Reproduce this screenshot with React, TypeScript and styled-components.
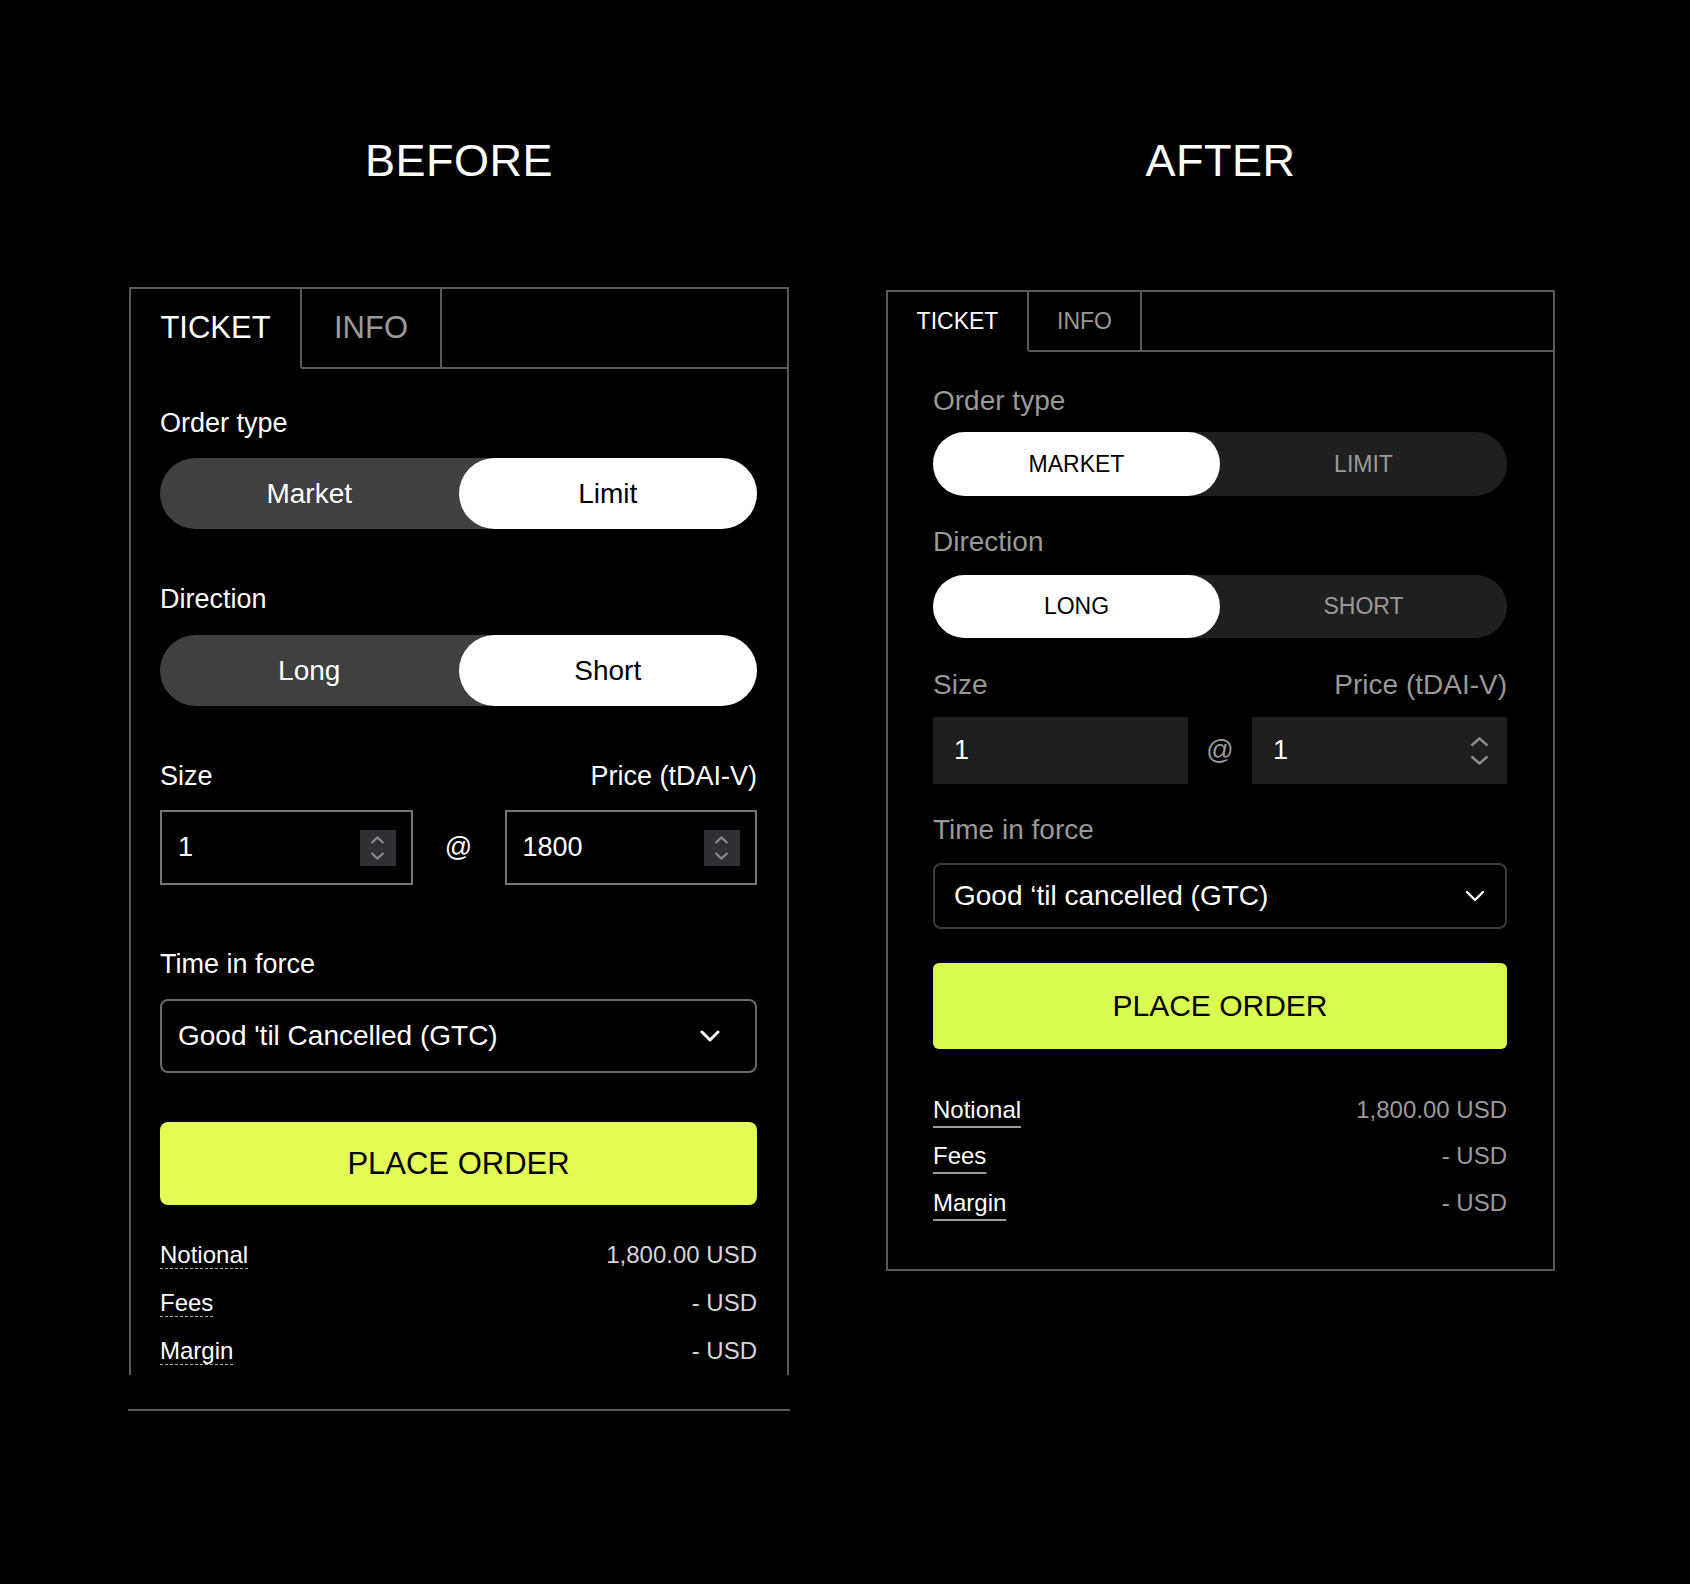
import * as React from 'react';
import styled, { createGlobalStyle } from 'styled-components';

type V = 'before' | 'after';

const look = {
  before: {
    border: '#5a5a5a',
    tabsH: 80,
    tabW: [171, 140],
    tabFont: 31,
    pad: '0 30px 0 29px',
    labelFont: 27,
    labelColor: '#ffffff',
    toggleBg: '#404040',
    toggleFont: 28,
    idleText: '#ffffff',
    inputH: 75,
    atGap: 92,
    selectH: 74,
    buttonBg: '#e4fb55',
    buttonH: 83,
    buttonFont: 31,
    rowH: 48,
  },
  after: {
    border: '#5a5a5a',
    tabsH: 60,
    tabW: [141, 113],
    tabFont: 23,
    pad: '0 46px 43px 45px',
    labelFont: 28,
    labelColor: '#999999',
    toggleBg: '#1f1f1f',
    toggleFont: 23,
    idleText: '#9a9a9a',
    inputH: 67,
    atGap: 64,
    selectH: 66,
    buttonBg: '#d9fb51',
    buttonH: 86,
    buttonFont: 30,
    rowH: 46.5,
  },
};

const GlobalStyle = createGlobalStyle`
  html, body {
    margin: 0;
    background: #000;
  }
  body {
    font-family: "Liberation Sans", Arial, sans-serif;
    color: #fff;
    min-height: 1584px;
  }
`;

const Page = styled.main`
  display: grid;
  grid-template-columns: 660px 669px;
  column-gap: 97px;
  align-items: start;
  padding: 135px 0 0 129px;
`;

const Column = styled.div`
  display: flex;
  flex-direction: column;
`;

const Heading = styled.h1`
  margin: 0 0 100px;
  font-size: 45px;
  line-height: 52px;
  font-weight: 400;
  text-align: center;
  letter-spacing: 0.5px;
`;

const Panel = styled.section<{ $v: V }>`
  display: flex;
  flex-direction: column;
  border: 2px solid ${({ $v }) => look[$v].border};
  ${({ $v }) => ($v === 'before' ? 'border-bottom: none;' : 'margin-top: 3px;')}
`;

const TabBar = styled.div<{ $v: V }>`
  display: flex;
  height: ${({ $v }) => look[$v].tabsH}px;
`;

const Tab = styled.div<{ $v: V; $active?: boolean; $w: number }>`
  display: flex;
  align-items: center;
  justify-content: center;
  width: ${({ $w }) => $w}px;
  box-sizing: border-box;
  border-right: 2px solid ${({ $v }) => look[$v].border};
  border-bottom: 2px solid ${({ $v, $active }) => ($active ? 'transparent' : look[$v].border)};
  font-size: ${({ $v }) => look[$v].tabFont}px;
  color: ${({ $active }) => ($active ? '#fff' : '#9a9a9a')};
`;

const TabFill = styled.div<{ $v: V }>`
  flex: 1;
  border-bottom: 2px solid ${({ $v }) => look[$v].border};
`;

const Body = styled.div<{ $v: V }>`
  display: flex;
  flex-direction: column;
  padding: ${({ $v }) => look[$v].pad};
`;

const LabelRow = styled.div<{ $v: V; $mt: number; $mb: number }>`
  display: flex;
  justify-content: space-between;
  margin: ${({ $mt, $mb }) => `${$mt}px 0 ${$mb}px`};
  font-size: ${({ $v }) => look[$v].labelFont}px;
  line-height: 32px;
  color: ${({ $v }) => look[$v].labelColor};
`;

const Toggle = styled.div<{ $v: V; $h: number }>`
  display: grid;
  grid-template-columns: 1fr 1fr;
  height: ${({ $h }) => $h}px;
  border-radius: 999px;
  background: ${({ $v }) => look[$v].toggleBg};
`;

const ToggleOption = styled.div<{ $v: V; $active?: boolean }>`
  display: flex;
  align-items: center;
  justify-content: center;
  border-radius: 999px;
  background: ${({ $active }) => ($active ? '#fff' : 'transparent')};
  color: ${({ $v, $active }) => ($active ? '#000' : look[$v].idleText)};
  font-size: ${({ $v }) => look[$v].toggleFont}px;
`;

const InputRow = styled.div<{ $v: V }>`
  display: grid;
  grid-template-columns: 1fr ${({ $v }) => look[$v].atGap}px 1fr;
  align-items: center;
`;

const At = styled.span<{ $v: V }>`
  text-align: center;
  font-size: 27px;
  color: ${({ $v }) => ($v === 'before' ? '#fff' : '#9a9a9a')};
`;

const Field = styled.div<{ $v: V }>`
  display: flex;
  align-items: center;
  justify-content: space-between;
  box-sizing: border-box;
  height: ${({ $v }) => look[$v].inputH}px;
  ${({ $v }) =>
    $v === 'before'
      ? 'border: 2px solid #767676; padding: 0 15px 0 16px;'
      : 'background: #1e1e1e; padding: 0 18px 0 21px;'}
  font-size: 27px;
  color: #fff;
`;

const SpinBox = styled.span`
  display: flex;
  width: 36px;
  height: 36px;
  background: #2f2f34;
`;

const Select = styled.div<{ $v: V }>`
  display: flex;
  align-items: center;
  justify-content: space-between;
  box-sizing: border-box;
  height: ${({ $v }) => look[$v].selectH}px;
  border: 2px solid ${({ $v }) => ($v === 'before' ? '#6a6a6a' : '#3a3a3a')};
  border-radius: 8px;
  padding: ${({ $v }) => ($v === 'before' ? '0 35px 0 16px' : '0 20px 0 19px')};
  font-size: 28px;
  color: #fff;
`;

const PlaceOrder = styled.button<{ $v: V; $mt: number }>`
  height: ${({ $v }) => look[$v].buttonH}px;
  margin-top: ${({ $mt }) => $mt}px;
  border: none;
  border-radius: ${({ $v }) => ($v === 'before' ? 8 : 6)}px;
  background: ${({ $v }) => look[$v].buttonBg};
  color: #000;
  font-family: inherit;
  font-size: ${({ $v }) => look[$v].buttonFont}px;
  cursor: pointer;
`;

const Summary = styled.dl<{ $mt: number }>`
  margin: ${({ $mt }) => $mt}px 0 0;
`;

const SummaryRow = styled.div<{ $v: V }>`
  display: flex;
  justify-content: space-between;
  align-items: center;
  height: ${({ $v }) => look[$v].rowH}px;
  font-size: 24px;
`;

const Term = styled.dt<{ $v: V }>`
  color: #fff;
  text-decoration-line: underline;
  ${({ $v }) =>
    $v === 'before'
      ? 'text-decoration-style: dashed; text-decoration-color: #aaa; text-decoration-thickness: 1px; text-underline-offset: 5px;'
      : 'text-decoration-style: solid; text-decoration-color: #9a9a9a; text-decoration-thickness: 2px; text-underline-offset: 8px;'}
`;

const Value = styled.dd<{ $v: V }>`
  margin: 0;
  color: ${({ $v }) => ($v === 'before' ? '#d6d6d6' : '#9a9a9a')};
`;

const BottomRule = styled.hr`
  margin: 34px -1px 0;
  border: none;
  border-top: 2px solid #5a5a5a;
`;

function BoxSpinner() {
  return (
    <SpinBox>
      <svg width="36" height="36" viewBox="0 0 36 36" fill="none" stroke="#8a8a90" strokeWidth="2.2">
        <path d="M11.5 13 L17.5 7.5 L23.5 13" />
        <path d="M11.5 23 L17.5 28.5 L23.5 23" />
      </svg>
    </SpinBox>
  );
}

function BareSpinner() {
  return (
    <svg width="19" height="28" viewBox="0 0 19 28" fill="none" stroke="#8c8c8c" strokeWidth="2.5">
      <path d="M1.5 8.5 L9.5 1.5 L17.5 8.5" />
      <path d="M1.5 19.5 L9.5 26.5 L17.5 19.5" />
    </svg>
  );
}

function ChevronDown({ $v }: { $v: V }) {
  const heavy = $v === 'before';
  return (
    <svg width="20" height="12" viewBox="0 0 20 12" fill="none" stroke="#fff" strokeWidth={heavy ? 3 : 2.4} strokeLinecap="round" strokeLinejoin="round">
      <path d="M2 2 L10 10 L18 2" />
    </svg>
  );
}

interface TicketProps {
  v: V;
  labels: { order: string[]; direction: string[]; tif: string; market: boolean };
  price: string;
  gaps: number[];
  toggleH: number[];
  labelGap: number[];
}

const summary = [
  ['Notional', '1,800.00 USD'],
  ['Fees', '- USD'],
  ['Margin', '- USD'],
];

function Ticket({ v, labels, price, gaps, toggleH, labelGap }: TicketProps) {
  const activeLeft = labels.market;
  return (
    <Panel $v={v}>
      <TabBar $v={v}>
        <Tab $v={v} $w={look[v].tabW[0]} $active>
          TICKET
        </Tab>
        <Tab $v={v} $w={look[v].tabW[1]}>
          INFO
        </Tab>
        <TabFill $v={v} />
      </TabBar>
      <Body $v={v}>
        <LabelRow $v={v} $mt={gaps[0]} $mb={labelGap[0]}>
          <span>Order type</span>
        </LabelRow>
        <Toggle $v={v} $h={toggleH[0]}>
          <ToggleOption $v={v} $active={activeLeft}>{labels.order[0]}</ToggleOption>
          <ToggleOption $v={v} $active={!activeLeft}>{labels.order[1]}</ToggleOption>
        </Toggle>

        <LabelRow $v={v} $mt={gaps[1]} $mb={labelGap[1]}>
          <span>Direction</span>
        </LabelRow>
        <Toggle $v={v} $h={toggleH[1]}>
          <ToggleOption $v={v} $active={activeLeft}>{labels.direction[0]}</ToggleOption>
          <ToggleOption $v={v} $active={!activeLeft}>{labels.direction[1]}</ToggleOption>
        </Toggle>

        <LabelRow $v={v} $mt={gaps[2]} $mb={labelGap[2]}>
          <span>Size</span>
          <span>Price (tDAI-V)</span>
        </LabelRow>
        <InputRow $v={v}>
          <Field $v={v}>
            <span>1</span>
            {v === 'before' && <BoxSpinner />}
          </Field>
          <At $v={v}>@</At>
          <Field $v={v}>
            <span>{price}</span>
            {v === 'before' ? <BoxSpinner /> : <BareSpinner />}
          </Field>
        </InputRow>

        <LabelRow $v={v} $mt={gaps[3]} $mb={labelGap[3]}>
          <span>Time in force</span>
        </LabelRow>
        <Select $v={v}>
          <span>{labels.tif}</span>
          <ChevronDown $v={v} />
        </Select>

        <PlaceOrder $v={v} $mt={gaps[4]}>PLACE ORDER</PlaceOrder>

        <Summary $mt={gaps[5]}>
          {summary.map(([term, value]) => (
            <SummaryRow key={term} $v={v}>
              <Term $v={v}>{term}</Term>
              <Value $v={v}>{value}</Value>
            </SummaryRow>
          ))}
        </Summary>
      </Body>
    </Panel>
  );
}

export default function App() {
  return (
    <>
      <GlobalStyle />
      <Page>
        <Column>
          <Heading>BEFORE</Heading>
          <Ticket
            v="before"
            labels={{
              order: ['Market', 'Limit'],
              direction: ['Long', 'Short'],
              tif: "Good 'til Cancelled (GTC)",
              market: false,
            }}
            price="1800"
            gaps={[37.5, 54, 54, 62.5, 49, 25.6]}
            toggleH={[71, 71]}
            labelGap={[19.5, 20, 18, 19.5]}
          />
          <BottomRule />
        </Column>
        <Column>
          <Heading>AFTER</Heading>
          <Ticket
            v="after"
            labels={{
              order: ['MARKET', 'LIMIT'],
              direction: ['LONG', 'SHORT'],
              tif: 'Good \u2018til cancelled (GTC)',
              market: true,
            }}
            price="1"
            gaps={[33, 30, 31, 30, 33.5, 38]}
            toggleH={[64, 63]}
            labelGap={[15, 16.5, 16.5, 17]}
          />
        </Column>
      </Page>
    </>
  );
}
